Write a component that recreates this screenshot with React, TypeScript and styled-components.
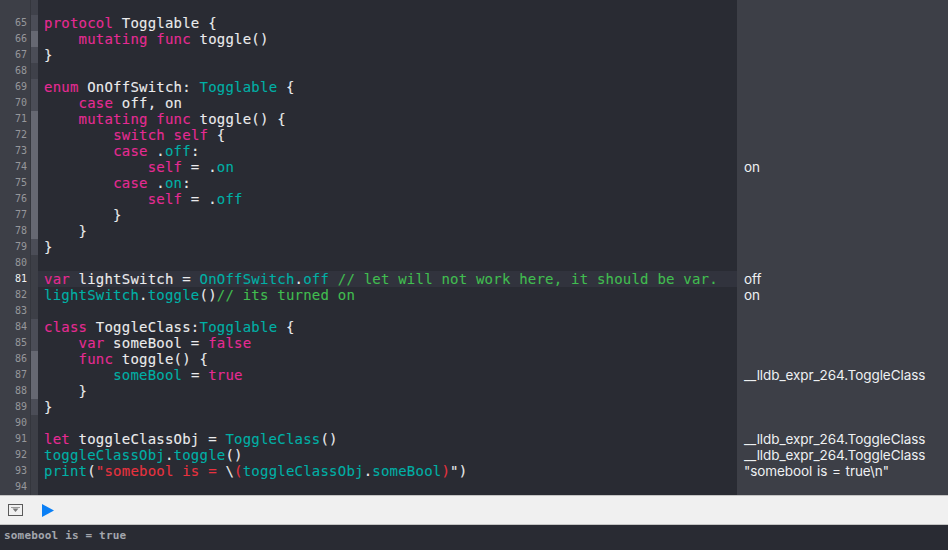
import React from "react";
import styled, { createGlobalStyle } from "styled-components";

const Global = createGlobalStyle`
  html, body { margin: 0; padding: 0; background: #292b33; }
`;

const Window = styled.div`
  width: 948px;
  height: 550px;
  display: flex;
  flex-direction: column;
  overflow: hidden;
  background: #292b33;
`;

const Editor = styled.div`
  height: 495px;
  overflow: hidden;
  flex: none;
`;

const Lines = styled.div`
  margin-top: -1px;
`;

const Row = styled.div`
  display: grid;
  grid-template-columns: 30px 8px 699px 211px;
  height: 16px;
`;

const LineNumber = styled.div<{ $current?: boolean }>`
  background: #3d3f47;
  color: ${(p) => (p.$current ? "#f2f2f2" : "#96979b")};
  font: 10px/16px "DejaVu Sans Mono", monospace;
  text-align: right;
  padding-right: 3px;
`;

const ribbonColors = { base: "#3d3f47", dim: "#3f414a", mid: "#4b4d57", light: "#666872" };

const Ribbon = styled.div<{ $shade: keyof typeof ribbonColors }>`
  background: ${(p) => ribbonColors[p.$shade]};
  border-left: 1px solid #34363d;
`;

const Code = styled.div<{ $current?: boolean }>`
  background: ${(p) => (p.$current ? "#31333d" : "#292b33")};
  color: #ebebed;
  font: 14px/16px "DejaVu Sans Mono", monospace;
  letter-spacing: 0.21px;
  -webkit-text-stroke: 0.1px;
  white-space: pre;
  padding-left: 6px;
  overflow: hidden;
`;

const Result = styled.div`
  background: #3d3f47;
  color: #eef0f2;
  font: 13.5px/16px Inter, "Liberation Sans", sans-serif;
  letter-spacing: -0.07px;
  word-spacing: 1px;
  padding-left: 7px;
  white-space: pre;
`;

const tokenColors = { k: "#e62a94", t: "#00b0a6", c: "#41bd50", s: "#e8323f" };

const Token = styled.span<{ $kind: keyof typeof tokenColors }>`
  color: ${(p) => tokenColors[p.$kind]};
`;

const DebugBar = styled.div`
  flex: none;
  height: 28px;
  box-sizing: content-box;
  background: #f0f0f0;
  border-top: 1px solid #c4c4c4;
  border-bottom: 1px solid #c4c4c4;
  display: flex;
  align-items: center;
  padding-left: 8px;
  gap: 19px;
`;

const ConsoleToggle = styled.button`
  width: 15px;
  height: 12px;
  box-sizing: border-box;
  border: 1px solid #5a5a5a;
  background: transparent;
  padding: 0;
  display: flex;
  align-items: center;
  justify-content: center;
`;

const PlayButton = styled.button`
  width: 12px;
  height: 13px;
  border: 0;
  background: transparent;
  padding: 0;
  display: flex;
`;

const Console = styled.div`
  flex: 1;
  color: #a3a6ad;
  font: bold 11px/21px "DejaVu Sans Mono", monospace;
  letter-spacing: 0.17px;
  padding: 0 0 0 4px;
  background: #292b33;
`;

type Seg = string | [keyof typeof tokenColors, string];
type Line = {
  n?: number;
  shade: keyof typeof ribbonColors;
  code?: Seg[];
  result?: string;
  current?: boolean;
};

const lines: Line[] = [
  { shade: "dim" },
  { n: 65, shade: "mid", code: [["k", "protocol"], " Togglable {"] },
  { n: 66, shade: "light", code: ["    ", ["k", "mutating"], " ", ["k", "func"], " toggle()"] },
  { n: 67, shade: "mid", code: ["}"] },
  { n: 68, shade: "dim" },
  { n: 69, shade: "mid", code: [["k", "enum"], " OnOffSwitch: ", ["t", "Togglable"], " {"] },
  { n: 70, shade: "mid", code: ["    ", ["k", "case"], " off, on"] },
  { n: 71, shade: "light", code: ["    ", ["k", "mutating"], " ", ["k", "func"], " toggle() {"] },
  { n: 72, shade: "light", code: ["        ", ["k", "switch"], " ", ["k", "self"], " {"] },
  { n: 73, shade: "light", code: ["        ", ["k", "case"], " .", ["t", "off"], ":"] },
  { n: 74, shade: "light", code: ["            ", ["k", "self"], " = .", ["t", "on"]], result: "on" },
  { n: 75, shade: "light", code: ["        ", ["k", "case"], " .", ["t", "on"], ":"] },
  { n: 76, shade: "light", code: ["            ", ["k", "self"], " = .", ["t", "off"]] },
  { n: 77, shade: "light", code: ["        }"] },
  { n: 78, shade: "light", code: ["    }"] },
  { n: 79, shade: "mid", code: ["}"] },
  { n: 80, shade: "base" },
  {
    n: 81,
    shade: "base",
    current: true,
    code: [
      ["k", "var"],
      " lightSwitch = ",
      ["t", "OnOffSwitch"],
      ".",
      ["t", "off"],
      " ",
      ["c", "// let will not work here, it should be var."],
    ],
    result: "off",
  },
  {
    n: 82,
    shade: "base",
    code: [["t", "lightSwitch"], ".", ["t", "toggle"], "()", ["c", "// its turned on"]],
    result: "on",
  },
  { n: 83, shade: "base" },
  { n: 84, shade: "mid", code: [["k", "class"], " ToggleClass:", ["t", "Togglable"], " {"] },
  { n: 85, shade: "mid", code: ["    ", ["k", "var"], " someBool = ", ["k", "false"]] },
  { n: 86, shade: "light", code: ["    ", ["k", "func"], " toggle() {"] },
  {
    n: 87,
    shade: "light",
    code: ["        ", ["t", "someBool"], " = ", ["k", "true"]],
    result: "__lldb_expr_264.ToggleClass",
  },
  { n: 88, shade: "light", code: ["    }"] },
  { n: 89, shade: "mid", code: ["}"] },
  { n: 90, shade: "base" },
  {
    n: 91,
    shade: "base",
    code: [["k", "let"], " toggleClassObj = ", ["t", "ToggleClass"], "()"],
    result: "__lldb_expr_264.ToggleClass",
  },
  {
    n: 92,
    shade: "base",
    code: [["t", "toggleClassObj"], ".", ["t", "toggle"], "()"],
    result: "__lldb_expr_264.ToggleClass",
  },
  {
    n: 93,
    shade: "base",
    code: [
      ["t", "print"],
      "(",
      ["s", '"somebool is = '],
      "\\",
      ["s", "("],
      ["t", "toggleClassObj"],
      ".",
      ["t", "someBool"],
      ["s", ")"],
      '")',
    ],
    result: '"somebool is = true\\n"',
  },
  { n: 94, shade: "base" },
];

export default function App() {
  return (
    <Window>
      <Global />
      <Editor>
        <Lines>
          {lines.map((line, i) => (
            <Row key={i}>
              <LineNumber $current={line.current}>{line.n}</LineNumber>
              <Ribbon $shade={line.shade} />
              <Code $current={line.current}>
                {line.code?.map((seg, j) =>
                  typeof seg === "string" ? (
                    <span key={j}>{seg}</span>
                  ) : (
                    <Token key={j} $kind={seg[0]}>
                      {seg[1]}
                    </Token>
                  ),
                )}
              </Code>
              <Result>{line.result}</Result>
            </Row>
          ))}
        </Lines>
      </Editor>
      <DebugBar>
        <ConsoleToggle aria-label="Toggle console">
          <svg width="9" height="6" viewBox="0 0 9 6">
            <path d="M0 0h9v1H0z" fill="#9a9a9a" />
            <path d="M1.5 1.5h6L4.5 5z" fill="#777" />
          </svg>
        </ConsoleToggle>
        <PlayButton aria-label="Run">
          <svg width="12" height="13" viewBox="0 0 12 13">
            <path d="M0 0l12 6.5L0 13z" fill="#0a7ff5" />
          </svg>
        </PlayButton>
      </DebugBar>
      <Console>somebool is = true</Console>
    </Window>
  );
}
